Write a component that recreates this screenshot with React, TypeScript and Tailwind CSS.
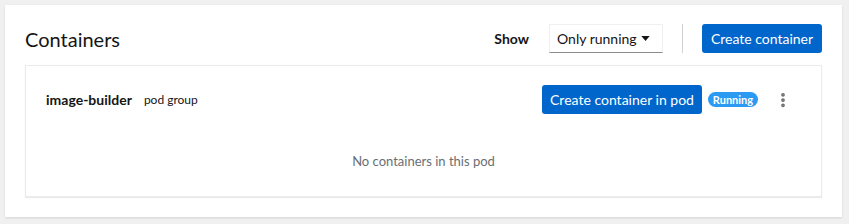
import { EllipsisVertical } from 'lucide-react'

export default function App() {
  return (
    <div className="min-h-[224px] bg-[#f0f0f0] pt-[5px] pl-[5px] font-['Lato',sans-serif] text-[#151515]">
      <div className="w-[837px] h-[212px] bg-white shadow-[0_1px_2px_rgba(3,3,3,0.12)] px-5 pt-[19px] pb-5 flex flex-col">
        {/* Header */}
        <div className="flex items-center h-[29px]">
          <h2 className="text-[20px] leading-none">Containers</h2>
          <div className="ml-auto flex items-center">
            <span className="text-[14px] font-bold mr-[20px]">Show</span>
            <div className="w-[114px] h-[29px] border border-[#f0f0f0] border-b-[#8a8d90] flex items-center pl-[7px] pr-[12px] text-[14px] whitespace-nowrap">
              <span>Only running</span>
              <svg className="ml-auto" width="9" height="5" viewBox="0 0 10 6">
                <path d="M0 0 L10 0 L5 6 Z" fill="#151515" />
              </svg>
            </div>
            <div className="w-px h-[29px] bg-[#d2d2d2] mx-[19px]" />
            <button className="w-[120px] h-[29px] rounded-[3px] bg-[#0066cc] text-white text-[14px] whitespace-nowrap">
              Create container
            </button>
          </div>
        </div>

        {/* Pod card */}
        <div className="mt-3 flex-1 border border-[#ebebeb] shadow-[0_1px_1px_rgba(3,3,3,0.08)] flex flex-col">
          <div className="flex items-center pl-5 pr-[26px] pt-[19px]">
            <span className="text-[14px] font-bold">image-builder</span>
            <span className="text-[12px] ml-[12px]">pod group</span>
            <div className="ml-auto flex items-center">
              <button className="w-[160px] h-[29px] rounded-[3px] bg-[#0066cc] text-white text-[14px] whitespace-nowrap">
                Create container in pod
              </button>
              <span className="ml-[6px] w-[50px] h-[15px] rounded-full bg-[#2b9af3] text-white text-[11px] font-bold leading-[15px] text-center">
                Running
              </span>
              <button className="ml-[13px] w-6 h-6 flex items-center justify-center text-[#6a6e73]">
                <EllipsisVertical size={18} strokeWidth={3} />
              </button>
            </div>
          </div>
          <div className="flex-1 flex items-center justify-center pt-[13px]">
            <span className="text-[13px] text-[#6a6e73]">No containers in this pod</span>
          </div>
        </div>
      </div>
    </div>
  )
}
